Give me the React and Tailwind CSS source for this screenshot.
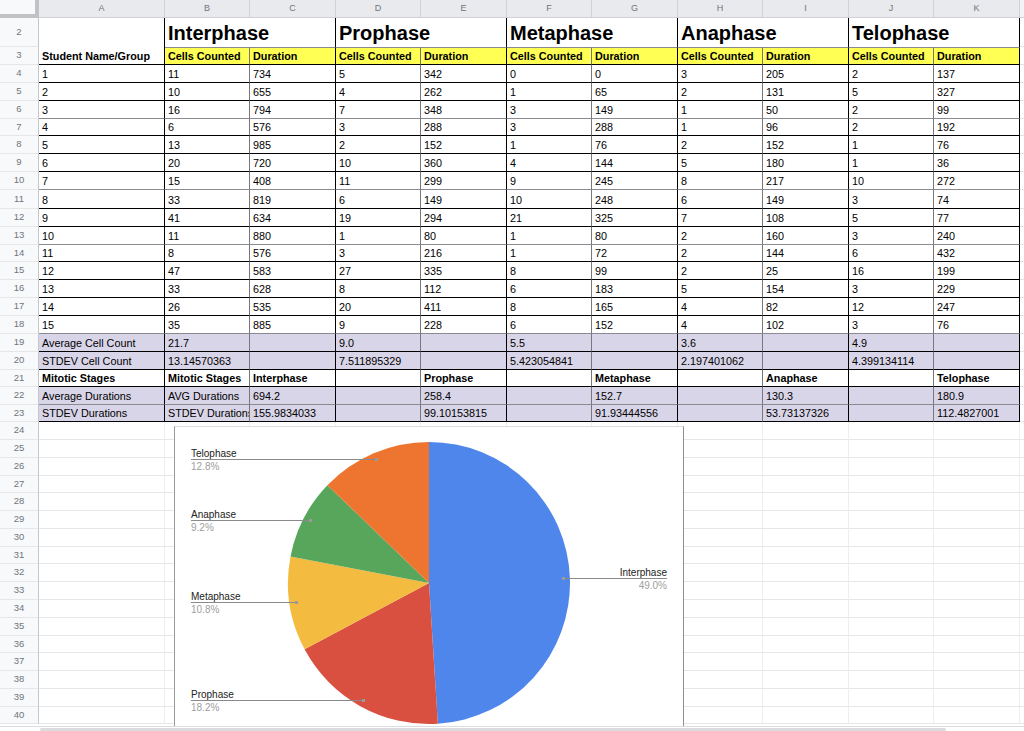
const font = "font-['Liberation_Sans',Arial,sans-serif]";

const columns = ["A", "B", "C", "D", "E", "F", "G", "H", "I", "J", "K"];

const stages = ["Interphase", "Prophase", "Metaphase", "Anaphase", "Telophase"];

// each student row: name, then cells/duration pairs for the five stages
const students = [
  ["1", "11", "734", "5", "342", "0", "0", "3", "205", "2", "137"],
  ["2", "10", "655", "4", "262", "1", "65", "2", "131", "5", "327"],
  ["3", "16", "794", "7", "348", "3", "149", "1", "50", "2", "99"],
  ["4", "6", "576", "3", "288", "3", "288", "1", "96", "2", "192"],
  ["5", "13", "985", "2", "152", "1", "76", "2", "152", "1", "76"],
  ["6", "20", "720", "10", "360", "4", "144", "5", "180", "1", "36"],
  ["7", "15", "408", "11", "299", "9", "245", "8", "217", "10", "272"],
  ["8", "33", "819", "6", "149", "10", "248", "6", "149", "3", "74"],
  ["9", "41", "634", "19", "294", "21", "325", "7", "108", "5", "77"],
  ["10", "11", "880", "1", "80", "1", "80", "2", "160", "3", "240"],
  ["11", "8", "576", "3", "216", "1", "72", "2", "144", "6", "432"],
  ["12", "47", "583", "27", "335", "8", "99", "2", "25", "16", "199"],
  ["13", "33", "628", "8", "112", "6", "183", "5", "154", "3", "229"],
  ["14", "26", "535", "20", "411", "8", "165", "4", "82", "12", "247"],
  ["15", "35", "885", "9", "228", "6", "152", "4", "102", "3", "76"],
];

const summary = [
  { n: 19, bg: "bg-[#d9d5e8]", cells: ["Average Cell Count", "21.7", "", "9.0", "", "5.5", "", "3.6", "", "4.9", ""] },
  { n: 20, bg: "bg-[#d9d5e8]", cells: ["STDEV Cell Count", "13.14570363", "", "7.511895329", "", "5.423054841", "", "2.197401062", "", "4.399134114", ""] },
  { n: 21, bg: "bg-white", bold: true, cells: ["Mitotic Stages", "Mitotic Stages", "Interphase", "", "Prophase", "", "Metaphase", "", "Anaphase", "", "Telophase"] },
  { n: 22, bg: "bg-[#d9d5e8]", cells: ["Average Durations", "AVG Durations", "694.2", "", "258.4", "", "152.7", "", "130.3", "", "180.9"] },
  { n: 23, bg: "bg-[#d9d5e8]", cells: ["STDEV Durations", "STDEV Durations", "155.9834033", "", "99.10153815", "", "91.93444556", "", "53.73137326", "", "112.4827001"] },
];

// rows whose bottom line comes out grey rather than black
const greyBottom = [6, 10, 13, 18, 22];

const emptyRows = Array.from({ length: 17 }, (_, i) => i + 24);

function RowLabel({ n }) {
  return (
    <div className="flex items-center justify-center border-r border-b border-r-[#c4c7c9] border-b-[#e4e6e8] bg-[#f8f9fa] text-[9.5px] text-[#70757a]">
      {n}
    </div>
  );
}

// col index 0 is A; odd columns (B, D, ...) get the grey divider on the right
function Cell({ col, row, bg = "bg-white", bold, children }) {
  const rightLine = col % 2 === 1 ? "border-r-[#77777c]" : "border-r-black";
  const bottomLine = greyBottom.includes(row) ? "border-b-[#8a8a90]" : "border-b-black";
  return (
    <div
      className={`flex items-end overflow-hidden whitespace-nowrap border-r border-b pb-[1px] pl-[3px] text-[10.8px] leading-[14px] text-black ${rightLine} ${bottomLine} ${bg} ${bold ? "font-bold" : ""}`}
    >
      {children}
    </div>
  );
}

function Spare({ bottom = true }) {
  return <div className={bottom ? "border-b border-b-[#e4e6e8]" : ""} />;
}

function ChartLabel({ name, pct, width, className }) {
  return (
    <div className={`absolute ${className}`}>
      <div className="h-[12px] text-[10px] leading-[14px] text-[#222]">{name}</div>
      <div className="h-px bg-[#8a8a8a]" style={{ width }} />
      <div className="text-[10px] leading-[14px] text-[#9e9e9e]">{pct}</div>
    </div>
  );
}

function Dot({ className }) {
  return <div className={`absolute size-[3px] bg-[#9a9a9a] ${className}`} />;
}

function piePoint(fraction) {
  const a = fraction * 2 * Math.PI;
  return [141 * Math.sin(a), -141 * Math.cos(a)];
}

function Pie() {
  const slices = [
    [0.49, "#4f86ec"],
    [0.182, "#d95040"],
    [0.108, "#f3bb40"],
    [0.092, "#58a65c"],
    [0.128, "#ee7530"],
  ];
  let start = 0;
  return (
    <svg className="absolute left-[112px] top-[14px]" width="284" height="284" viewBox="-142 -142 284 284">
      {slices.map(([part, color]) => {
        const [x1, y1] = piePoint(start);
        start += part;
        const [x2, y2] = piePoint(start);
        return <path key={color} d={`M0 0L${x1} ${y1}A141 141 0 0 1 ${x2} ${y2}Z`} fill={color} />;
      })}
    </svg>
  );
}

function Chart() {
  return (
    <div className="absolute left-[174px] top-[426px] h-[300px] w-[510px] border-t border-r border-l border-t-[#dcdcdc] border-r-[#8f8f8f] border-l-[#9a9a9a] bg-white">
      <Pie />
      <ChartLabel name="Telophase" pct="12.8%" width={185} className="left-[16px] top-[20px]" />
      <ChartLabel name="Anaphase" pct="9.2%" width={119} className="left-[16px] top-[81px]" />
      <ChartLabel name="Metaphase" pct="10.8%" width={105} className="left-[16px] top-[163px]" />
      <ChartLabel name="Prophase" pct="18.2%" width={172} className="left-[16px] top-[261px]" />
      <div className="absolute left-[388px] top-[139px] flex w-[104px] flex-col items-end">
        <div className="h-[12px] text-[10px] leading-[14px] text-[#222]">Interphase</div>
        <div className="h-px w-full bg-[#8a8a8a]" />
        <div className="text-[10px] leading-[14px] text-[#9e9e9e]">49.0%</div>
      </div>
      <Dot className="left-[200px] top-[31px]" />
      <Dot className="left-[134px] top-[92px]" />
      <Dot className="left-[120px] top-[174px]" />
      <Dot className="left-[187px] top-[272px]" />
      <Dot className="left-[387px] top-[150px]" />
    </div>
  );
}

export default function App() {
  return (
    <div className={`relative h-[731px] w-[1024px] overflow-hidden bg-white ${font}`}>
      <div className="grid grid-cols-[39px_126px_85px_86px_85px_86px_85px_86px_85px_86px_85px_86px_5px] grid-rows-[18px_29px_18px_18px_18px_18px_17px_18px_18px_18px_19px_18px_18px_17px_18px_18px_18px_18px_18px_18px_17px_18px_17px_18px_18px_18px_17px_18px_18px_18px_17px_18px_18px_18px_18px_17px_18px_18px_18px_17px]">
        {/* column letters */}
        <div className="relative bg-[#f8f9fa]">
          <div className="absolute top-0 right-0 h-full w-[4px] bg-[#c0c2c4]" />
          <div className="absolute bottom-0 left-0 h-[4px] w-full bg-[#c0c2c4]" />
        </div>
        {columns.map((c) => (
          <div key={c} className="flex items-center justify-center border-r border-b border-[#cfd1d4] bg-[#e8eaed] text-[9px] text-[#70757a]">
            {c}
          </div>
        ))}
        <div className="border-b border-[#cfd1d4] bg-[#f1f3f4]" />

        {/* row 2: stage titles */}
        <RowLabel n={2} />
        <div className="border-r border-r-black bg-white" />
        {stages.map((s) => (
          <div key={s} className="col-span-2 flex items-center overflow-hidden border-r border-r-black bg-white pl-[3px] text-[20px] font-bold text-black">
            {s}
          </div>
        ))}
        <Spare />

        {/* row 3: column titles */}
        <RowLabel n={3} />
        <div className="flex items-end border-r border-b border-r-black border-b-black bg-white pb-[1px] pl-[3px] text-[10.8px] leading-[14px] font-bold text-black">
          Student Name/Group
        </div>
        {stages.map((s) => [
          <div key={s + "c"} className="flex items-end border-t border-r border-b border-t-[#8a8a90] border-r-[#77777c] border-b-black bg-[#ffff54] pb-[1px] pl-[3px] text-[10.8px] leading-[14px] font-bold text-black">
            Cells Counted
          </div>,
          <div key={s + "d"} className="flex items-end border-t border-r border-b border-t-[#8a8a90] border-r-black border-b-black bg-[#ffff54] pb-[1px] pl-[3px] text-[10.8px] leading-[14px] font-bold text-black">
            Duration
          </div>,
        ])}
        <Spare />

        {/* rows 4-18: student data */}
        {students.map((cells, i) => [
          <RowLabel key={"l" + i} n={i + 4} />,
          ...cells.map((v, col) => (
            <Cell key={i + "-" + col} col={col} row={i + 4}>
              {v}
            </Cell>
          )),
          <Spare key={"s" + i} />,
        ])}

        {/* rows 19-23: averages and deviations */}
        {summary.map((r) => [
          <RowLabel key={"l" + r.n} n={r.n} />,
          ...r.cells.map((v, col) => (
            <Cell key={r.n + "-" + col} col={col} row={r.n} bg={r.bg} bold={r.bold}>
              {v}
            </Cell>
          )),
          <Spare key={"s" + r.n} />,
        ])}

        {/* rows 24-40: empty sheet */}
        {emptyRows.map((n) => [
          <RowLabel key={"l" + n} n={n} />,
          ...columns.map((c) => <div key={n + c} className="border-r border-b border-r-[#eeeeee] border-b-[#e4e6e8]" />),
          <Spare key={"s" + n} />,
        ])}
      </div>

      <Chart />

      {/* horizontal scrollbar */}
      <div className="absolute bottom-0 left-0 h-[5px] w-full border-t border-[#dadce0] bg-white">
        <div className="ml-[40px] mt-[1px] h-[3px] w-[906px] rounded-[2px] bg-[#dadce0]" />
      </div>
    </div>
  );
}
